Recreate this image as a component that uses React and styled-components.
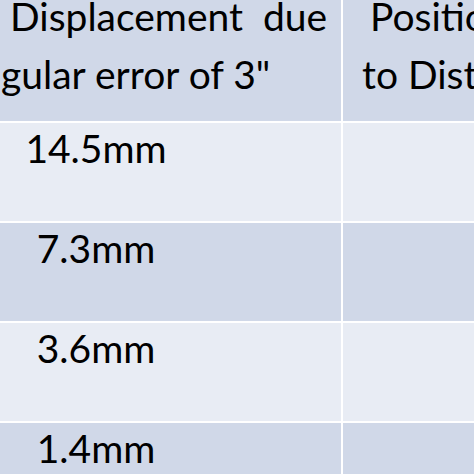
import React from "react";
import styled, { createGlobalStyle } from "styled-components";

const Global = createGlobalStyle`
  html, body { margin: 0; padding: 0; background: #ffffff; overflow: hidden; }
  #root { width: 474px; height: 474px; overflow: hidden; }
`;

const Table = styled.div`
  width: 474px;
  height: 474px;
  overflow: hidden;
  background: #ffffff;
  display: grid;
  grid-template-columns: 341px 1fr;
  grid-template-rows: 121px repeat(4, 98px);
  column-gap: 2px;
  row-gap: 2px;
  font-family: Lato, "Open Sans", sans-serif;
  color: #000000;
`;

const Cell = styled.div`
  background: ${(p) => (p.$light ? "#e8ecf4" : "#d0d8e8")};
  overflow: hidden;
  white-space: pre;
`;

const HeadText = styled.div`
  font-size: 39px;
  line-height: 58px;
  margin-top: -13px;
`;

const HeadLine = styled.div`
  padding-left: ${(p) => p.$indent}px;
`;

const Value = styled.div`
  width: 192px;
  text-align: center;
  font-size: 39px;
  line-height: 48px;
  padding-top: 1px;
`;

const rows = ["14.5mm", "7.3mm", "3.6mm", "1.4mm"];

export default function App() {
  return (
    <>
      <Global />
      <Table>
        <Cell>
          <HeadText>
            <HeadLine $indent={10}>{"Displacement  due"}</HeadLine>
            <HeadLine $indent={1}>gular error of 3"</HeadLine>
          </HeadText>
        </Cell>
        <Cell>
          <HeadText>
            <HeadLine $indent={27}>Position</HeadLine>
            <HeadLine $indent={19}>to Distance</HeadLine>
          </HeadText>
        </Cell>
        {rows.map((v, i) => (
          <React.Fragment key={v}>
            <Cell $light={i % 2 === 0}>
              <Value>{v}</Value>
            </Cell>
            <Cell $light={i % 2 === 0} />
          </React.Fragment>
        ))}
      </Table>
    </>
  );
}
